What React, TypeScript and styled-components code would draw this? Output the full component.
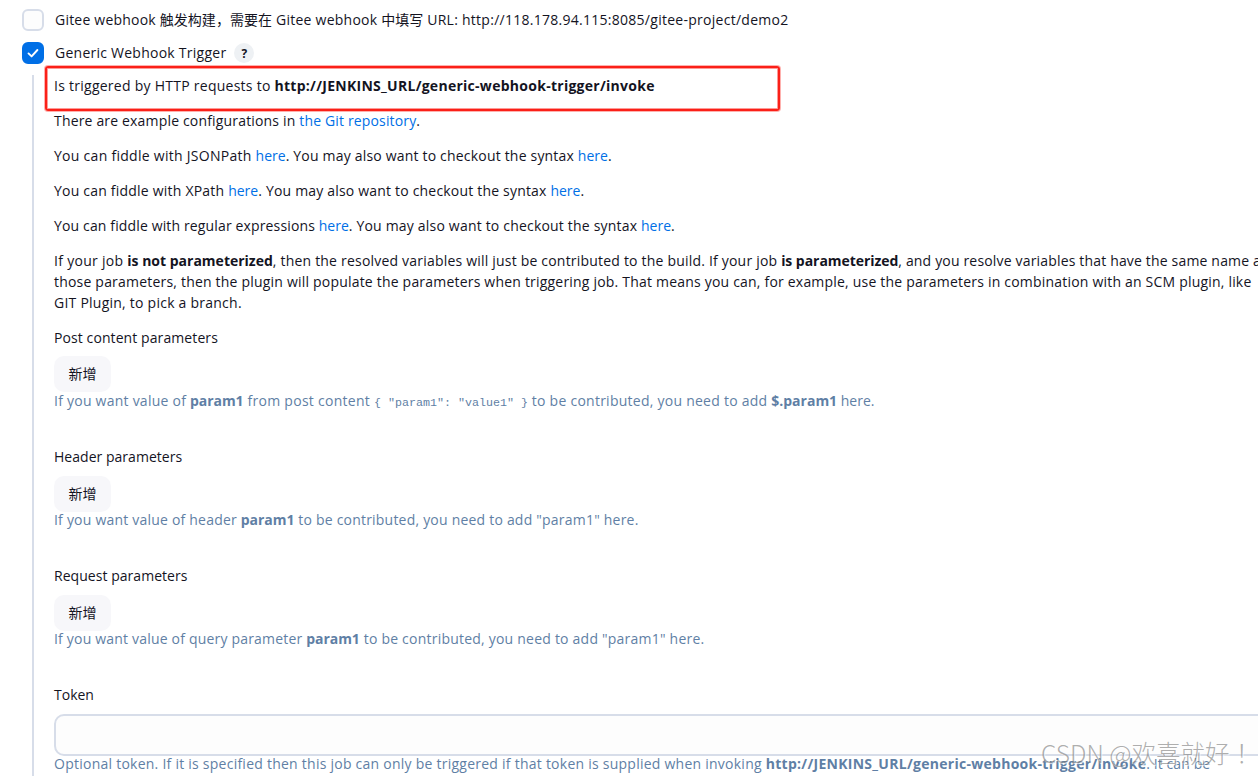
import React from 'react'
import styled, { createGlobalStyle, css } from 'styled-components'

const colors = {
  text: '#14141f',
  textSecondary: '#5f7fa5',
  link: '#006fe6',
  border: '#d7dde9',
  button: '#f7f7fa',
  input: '#fdfdfd',
  highlight: '#fb2018'
}

const GlobalStyle = createGlobalStyle`
  *, *::before, *::after {
    box-sizing: border-box;
  }
  body {
    margin: 0;
    background: #fff;
    overflow: hidden;
  }
`

export default function App() {
  return (
    <Page>
      <GlobalStyle />
      <CheckRow>
        <Checkbox />
        <CheckLabel>
          <T $spacing={0.21}>Gitee webhook </T>
          <T $spacing={0.05}>触发构建，需要在</T>
          <T $spacing={0.25}> Gitee webhook </T>
          <T $spacing={0}>中填写</T>
          <T $spacing={0.27}>
            {' URL: http://118.178.94.115:8085/gitee-project/demo2'}
          </T>
        </CheckLabel>
      </CheckRow>
      <CheckRow>
        <Checkbox checked />
        <CheckLabel>
          <T $spacing={0.25}>Generic Webhook Trigger</T>
        </CheckLabel>
        <Help>?</Help>
      </CheckRow>

      <Nested>
        <Highlight />
        <Paragraph>
          <T $spacing={0.26}>Is triggered by HTTP requests to </T>
          <B $spacing={0.275}>
            http://JENKINS_URL/generic-webhook-trigger/invoke
          </B>
        </Paragraph>
        <Paragraph>
          <T $spacing={0.17}>There are example configurations in </T>
          <Link $spacing={0.15}>the Git repository</Link>
          <T>.</T>
        </Paragraph>
        <Fiddle subject="JSONPath" spacing={0.28} />
        <Fiddle subject="XPath" spacing={0.21} />
        <Fiddle subject="regular expressions" spacing={0.14} />
        <Paragraph>
          <T $spacing={0.29}>If your job </T>
          <B>is not parameterized</B>
          <T $spacing={0.2}>
            , then the resolved variables will just be contributed to the build.
            If your job{' '}
          </T>
          <B $spacing={-0.05}>is parameterized</B>
          <T $spacing={0.17}>
            , and you resolve variables that have the same name as
          </T>
          <br />
          <T>
            those parameters, then the plugin will populate the parameters when
            triggering job. That means you can, for example, use the parameters
            in combination with an SCM plugin, like
          </T>
          <br />
          <T $spacing={0.24}>GIT Plugin, to pick a branch.</T>
        </Paragraph>

        <Parameters title="Post content parameters" spacing={0.09}>
          <T $spacing={0.24}>If you want value of </T>
          <B $spacing={-0.05}>param1</B>
          <T $spacing={0.28}> from post content </T>
          <Code>{'{ "param1": "value1" }'}</Code>
          <T $spacing={0.25}> to be contributed, you need to add </T>
          <B>$.param1</B>
          <T $spacing={0}> here.</T>
        </Parameters>
        <Parameters title="Header parameters" spacing={0.03}>
          <T $spacing={0.21}>If you want value of header </T>
          <B $spacing={-0.05}>param1</B>
          <T $spacing={0.21}>
            {' to be contributed, you need to add "param1" here.'}
          </T>
        </Parameters>
        <Parameters title="Request parameters" spacing={0.04}>
          <T $spacing={0.19}>If you want value of query parameter </T>
          <B $spacing={-0.05}>param1</B>
          <T $spacing={0.22}>
            {' to be contributed, you need to add "param1" here.'}
          </T>
        </Parameters>

        <Group>
          <Label>Token</Label>
          <Input />
          <Description>
            <T $spacing={0.245}>
              Optional token. If it is specified then this job can only be
              triggered if that token is supplied when invoking{' '}
            </T>
            <B $spacing={0.28}>
              http://JENKINS_URL/generic-webhook-trigger/invoke
            </B>
            <T $spacing={0.1}>. It can be</T>
          </Description>
        </Group>
      </Nested>
      <Watermark>
        CSDN @欢喜就好<Exclamation>！</Exclamation>
      </Watermark>
    </Page>
  )
}

function Fiddle({ subject, spacing }: { subject: string; spacing: number }) {
  return (
    <Paragraph>
      <T $spacing={spacing}>You can fiddle with {subject} </T>
      <Link>here</Link>
      <T $spacing={0.19}>. You may also want to checkout the syntax </T>
      <Link>here</Link>
      <T>.</T>
    </Paragraph>
  )
}

function Parameters({
  title,
  spacing,
  children
}: {
  title: string
  spacing: number
  children: React.ReactNode
}) {
  return (
    <Group>
      <Label $spacing={spacing}>{title}</Label>
      <AddButton>新增</AddButton>
      <Description>{children}</Description>
    </Group>
  )
}

function Checkbox({ checked = false }: { checked?: boolean }) {
  return (
    <Box $checked={checked}>
      {checked && (
        <svg width="12" height="10" viewBox="0 0 12 10" fill="none">
          <path
            d="M1.5 5.4 4.6 8.4 10.4 2"
            stroke="#fff"
            strokeWidth="1.9"
            strokeLinecap="round"
            strokeLinejoin="round"
          />
        </svg>
      )}
    </Box>
  )
}

const Page = styled.main`
  position: relative;
  width: 1258px;
  height: 776px;
  padding-top: 9px;
  overflow: hidden;
  font: 14px/21px 'Open Sans', 'Noto Sans CJK SC', sans-serif;
  color: ${colors.text};
`

const CheckRow = styled.div`
  display: flex;
  align-items: center;
  height: 22px;
  margin: 0 0 11px 22px;
`

const CheckLabel = styled.label`
  height: 21px;
  margin-top: -2px;
  white-space: pre;
`

const Box = styled.span<{ $checked: boolean }>`
  display: flex;
  align-items: center;
  justify-content: center;
  width: 22px;
  height: 22px;
  margin-right: 11px;
  border: 2px solid ${colors.border};
  border-radius: 6px;
  background: ${colors.input};

  ${({ $checked }) =>
    $checked &&
    css`
      border-color: ${colors.link};
      background: ${colors.link};
    `}
`

const Help = styled.span`
  width: 20px;
  height: 20px;
  margin-left: 8px;
  border-radius: 50%;
  background: #eef1f4;
  font-size: 12px;
  font-weight: 700;
  line-height: 21px;
  text-align: center;
`

const Nested = styled.section`
  position: relative;
  margin-left: 32px;
  padding-left: 20px;
  border-left: 2px solid ${colors.border};
  white-space: nowrap;
`

const Highlight = styled.div`
  position: absolute;
  top: -9px;
  left: 11px;
  width: 735px;
  height: 45px;
  border: 2px solid ${colors.highlight};
  border-radius: 3px;
  box-shadow:
    0 0 0 1px rgb(251 32 24 / 35%),
    inset 0 0 0 1px rgb(251 32 24 / 45%);
`

const Paragraph = styled.p`
  margin: 0 0 14px;
`

const T = styled.span<{ $spacing?: number }>`
  letter-spacing: ${({ $spacing = 0.2 }) => $spacing}px;
  white-space: pre;
`

const B = styled.b<{ $spacing?: number }>`
  letter-spacing: ${({ $spacing = 0 }) => $spacing}px;
`

const Link = styled.a<{ $spacing?: number }>`
  color: ${colors.link};
  letter-spacing: ${({ $spacing = 0 }) => $spacing}px;
`

const Code = styled.code`
  font: 11.67px/1 'Liberation Mono', monospace;
  white-space: pre;
`

const Group = styled.div`
  height: 119.05px;
`

const Label = styled.div<{ $spacing?: number }>`
  margin-bottom: 8.5px;
  letter-spacing: ${({ $spacing = 0 }) => $spacing}px;
`

const AddButton = styled.button`
  display: block;
  width: 57px;
  height: 36px;
  margin-top: -0.05px;
  padding: 0 0 2px;
  border: 0;
  border-radius: 10px;
  background: ${colors.button};
  color: ${colors.text};
  font: 400 14px/34px 'Noto Sans CJK SC', sans-serif;
`

const Input = styled.input`
  display: block;
  width: 1300px;
  height: 42px;
  border: 2px solid ${colors.border};
  border-radius: 10px;
  background: ${colors.input};
`

const Description = styled.div`
  margin-top: 0.1px;
  color: ${colors.textSecondary};
  line-height: 16px;
`

const Watermark = styled.div`
  position: absolute;
  right: 4px;
  bottom: 7px;
  color: rgb(120 120 120 / 60%);
  font: 300 24.5px/32px 'Noto Sans CJK SC', sans-serif;
  text-shadow: 1px 1px 1px rgb(255 255 255 / 80%);
  white-space: nowrap;
`

const Exclamation = styled.span`
  font-family: 'Noto Sans CJK TC', sans-serif;
`
